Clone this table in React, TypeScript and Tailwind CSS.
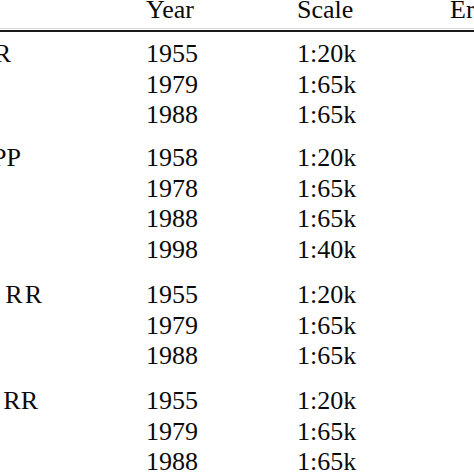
const groups = [
  {
    label: "MR",
    labelEnd: 11,
    gap: "mt-0",
    rows: [
      { year: "1955", scale: "1:20k" },
      { year: "1979", scale: "1:65k" },
      { year: "1988", scale: "1:65k" },
    ],
  },
  {
    label: "SPP",
    labelEnd: 21,
    gap: "mt-[12.5px]",
    rows: [
      { year: "1958", scale: "1:20k" },
      { year: "1978", scale: "1:65k" },
      { year: "1988", scale: "1:65k" },
      { year: "1998", scale: "1:40k" },
    ],
  },
  {
    label: "C RR",
    labelEnd: 44,
    gap: "mt-[15px]",
    tracking: "tracking-[2px]",
    rows: [
      { year: "1955", scale: "1:20k" },
      { year: "1979", scale: "1:65k" },
      { year: "1988", scale: "1:65k" },
    ],
  },
  {
    label: "W RR",
    labelEnd: 38,
    gap: "mt-[14.5px]",
    rows: [
      { year: "1955", scale: "1:20k" },
      { year: "1979", scale: "1:65k" },
      { year: "1988", scale: "1:65k" },
    ],
  },
];

function Label({ text, end, tracking }: { text: string; end: number; tracking?: string }) {
  // only the right end of the label shows, the rest runs off the left side
  return (
    <div className="w-[146px] shrink-0">
      <div className={`flex justify-end whitespace-nowrap ${tracking ?? ""}`} style={{ width: end }}>
        <span>{text}</span>
      </div>
    </div>
  );
}

export default function App() {
  return (
    <div
      className="relative w-[474px] h-[474px] overflow-hidden bg-white text-[#0a0a0a] text-[26px] leading-[30.5px]"
      style={{ fontFamily: '"Liberation Serif", "Times New Roman", serif' }}
    >
      <div className="mt-[-5px]">
        <div className="flex h-[33px] whitespace-nowrap">
          <div className="w-[146px] shrink-0" />
          <div className="w-[151px] shrink-0">Year</div>
          <div className="w-[153px] shrink-0">Scale</div>
          <div className="shrink-0">Error</div>
        </div>
        <div className="h-px bg-[#d8d8d8]" />
        <div className="h-px" />
        <div className="h-[2px] bg-[#1a1a1a]" />
        <div className="mt-[7px]">
          {groups.map((g) => (
            <div key={g.label} className={g.gap}>
              {g.rows.map((r, i) => (
                <div key={r.year + i} className="flex whitespace-nowrap">
                  {i === 0 ? (
                    <Label text={g.label} end={g.labelEnd} tracking={g.tracking} />
                  ) : (
                    <div className="w-[146px] shrink-0" />
                  )}
                  <div className="w-[151px] shrink-0">{r.year}</div>
                  <div className="w-[153px] shrink-0">{r.scale}</div>
                </div>
              ))}
            </div>
          ))}
        </div>
      </div>
    </div>
  );
}
